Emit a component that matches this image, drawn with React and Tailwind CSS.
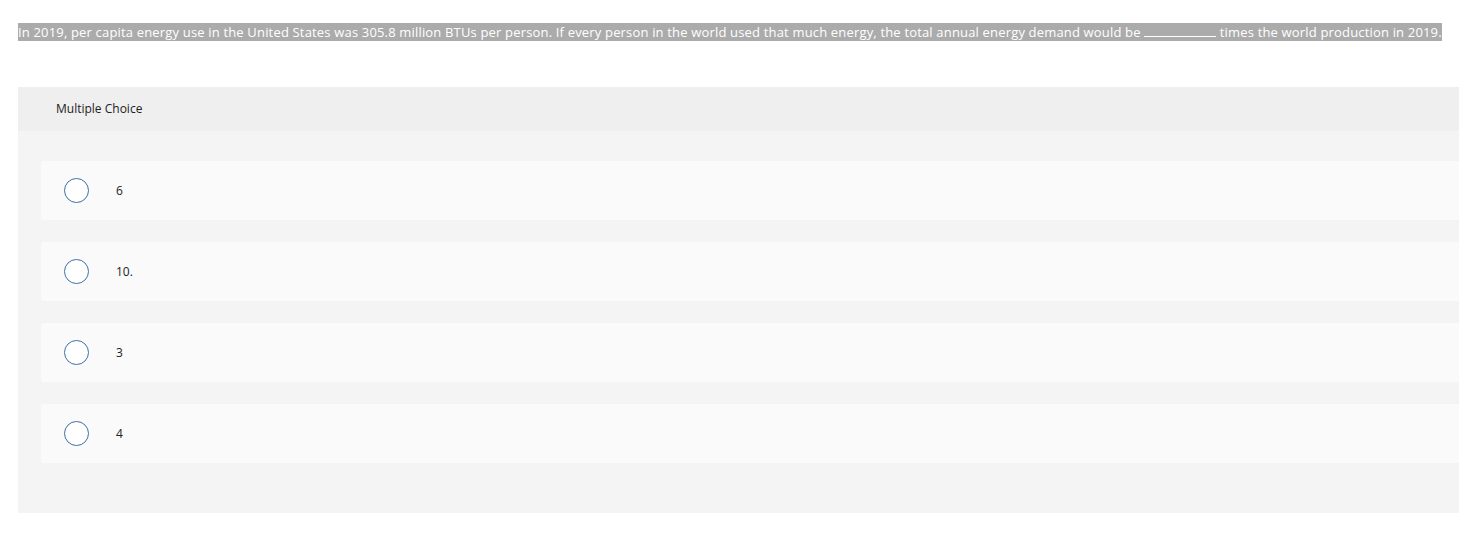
export default function App() {
  const options = ["6", "10.", "3", "4"];
  return (
    <div className="w-[1459px] h-[550px] bg-white" style={{ fontFamily: "'Open Sans', Lato, 'Liberation Sans', sans-serif" }}>
      <div className="pt-[24px] pl-[18px] text-[13px] leading-[17px] h-[41px] tracking-[0.17px]">
        <span className="bg-[#ababab] text-white whitespace-nowrap">
          In 2019, per capita energy use in the United States was 305.8 million BTUs per person. If every person in the world used that much energy, the total annual energy demand would be <span className="inline-block w-[72px] border-b border-white h-[11px] align-baseline"></span> times the world production in 2019.
        </span>
      </div>
      <div className="ml-[18px] mt-[46px] bg-[#f4f4f4] h-[426px]">
        <div className="h-[44px] bg-[#efefef] flex items-center pl-[38px] text-[12px] text-[#222]">
          Multiple Choice
        </div>
        <div className="flex flex-col gap-[22px] pl-[23px] pt-[30px]">
          {options.map((o) => (
            <div key={o} className="h-[59px] bg-[#fafafa] rounded-l-[3px] flex items-center">
              <div className="ml-[23px] w-[25px] h-[25px] rounded-full border-[1.5px] border-[#3f6fa6] bg-white"></div>
              <div className="ml-[27px] text-[12px] text-[#222]">{o}</div>
            </div>
          ))}
        </div>
      </div>
    </div>
  );
}
